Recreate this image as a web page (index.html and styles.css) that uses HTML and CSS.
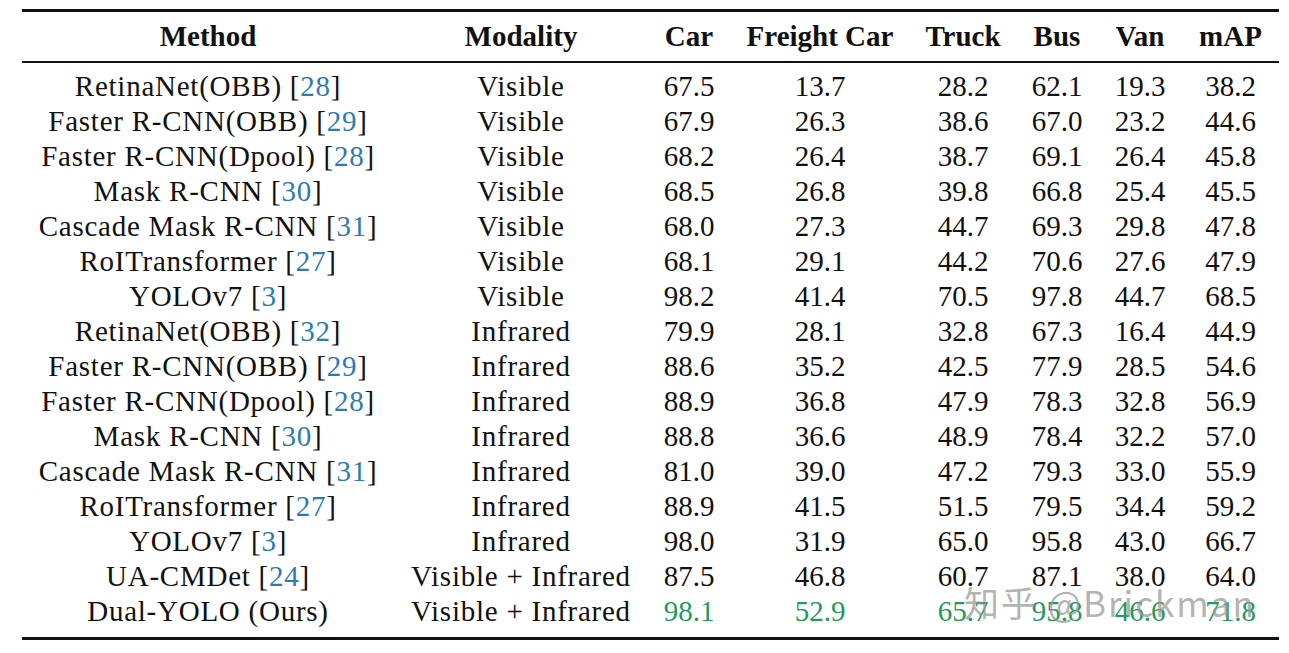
FILE: index.html
```html
<!DOCTYPE html>
<html lang="en">
<head>
<meta charset="utf-8">
<title>Results table</title>
<link rel="stylesheet" href="styles.css">
</head>
<body>
<div class="page">
  <table class="results">
    <colgroup>
      <col class="c-method"><col class="c-mod"><col class="c-car"><col class="c-freight"><col class="c-truck"><col class="c-bus"><col class="c-van"><col class="c-map">
    </colgroup>
    <thead>
      <tr><th>Method</th><th>Modality</th><th>Car</th><th>Freight Car</th><th>Truck</th><th>Bus</th><th>Van</th><th>mAP</th></tr>
    </thead>
    <tbody>
      <tr><td class="txt">RetinaNet(OBB) [<span class="ref">28</span>]</td><td class="txt">Visible</td><td>67.5</td><td>13.7</td><td>28.2</td><td>62.1</td><td>19.3</td><td>38.2</td></tr>
      <tr><td class="txt">Faster R-CNN(OBB) [<span class="ref">29</span>]</td><td class="txt">Visible</td><td>67.9</td><td>26.3</td><td>38.6</td><td>67.0</td><td>23.2</td><td>44.6</td></tr>
      <tr><td class="txt">Faster R-CNN(Dpool) [<span class="ref">28</span>]</td><td class="txt">Visible</td><td>68.2</td><td>26.4</td><td>38.7</td><td>69.1</td><td>26.4</td><td>45.8</td></tr>
      <tr><td class="txt">Mask R-CNN [<span class="ref">30</span>]</td><td class="txt">Visible</td><td>68.5</td><td>26.8</td><td>39.8</td><td>66.8</td><td>25.4</td><td>45.5</td></tr>
      <tr><td class="txt">Cascade Mask R-CNN [<span class="ref">31</span>]</td><td class="txt">Visible</td><td>68.0</td><td>27.3</td><td>44.7</td><td>69.3</td><td>29.8</td><td>47.8</td></tr>
      <tr><td class="txt">RoITransformer [<span class="ref">27</span>]</td><td class="txt">Visible</td><td>68.1</td><td>29.1</td><td>44.2</td><td>70.6</td><td>27.6</td><td>47.9</td></tr>
      <tr><td class="txt">YOLOv7 [<span class="ref">3</span>]</td><td class="txt">Visible</td><td>98.2</td><td>41.4</td><td>70.5</td><td>97.8</td><td>44.7</td><td>68.5</td></tr>
      <tr><td class="txt">RetinaNet(OBB) [<span class="ref">32</span>]</td><td class="txt">Infrared</td><td>79.9</td><td>28.1</td><td>32.8</td><td>67.3</td><td>16.4</td><td>44.9</td></tr>
      <tr><td class="txt">Faster R-CNN(OBB) [<span class="ref">29</span>]</td><td class="txt">Infrared</td><td>88.6</td><td>35.2</td><td>42.5</td><td>77.9</td><td>28.5</td><td>54.6</td></tr>
      <tr><td class="txt">Faster R-CNN(Dpool) [<span class="ref">28</span>]</td><td class="txt">Infrared</td><td>88.9</td><td>36.8</td><td>47.9</td><td>78.3</td><td>32.8</td><td>56.9</td></tr>
      <tr><td class="txt">Mask R-CNN [<span class="ref">30</span>]</td><td class="txt">Infrared</td><td>88.8</td><td>36.6</td><td>48.9</td><td>78.4</td><td>32.2</td><td>57.0</td></tr>
      <tr><td class="txt">Cascade Mask R-CNN [<span class="ref">31</span>]</td><td class="txt">Infrared</td><td>81.0</td><td>39.0</td><td>47.2</td><td>79.3</td><td>33.0</td><td>55.9</td></tr>
      <tr><td class="txt">RoITransformer [<span class="ref">27</span>]</td><td class="txt">Infrared</td><td>88.9</td><td>41.5</td><td>51.5</td><td>79.5</td><td>34.4</td><td>59.2</td></tr>
      <tr><td class="txt">YOLOv7 [<span class="ref">3</span>]</td><td class="txt">Infrared</td><td>98.0</td><td>31.9</td><td>65.0</td><td>95.8</td><td>43.0</td><td>66.7</td></tr>
      <tr><td class="txt">UA-CMDet [<span class="ref">24</span>]</td><td class="txt">Visible + Infrared</td><td>87.5</td><td>46.8</td><td>60.7</td><td>87.1</td><td>38.0</td><td>64.0</td></tr>
      <tr><td class="txt">Dual-YOLO (Ours)</td><td class="txt">Visible + Infrared</td><td class="best">98.1</td><td class="best">52.9</td><td class="best">65.7</td><td class="best">95.8</td><td class="best">46.6</td><td class="best">71.8</td></tr>
    </tbody>
  </table>
  <div class="watermark">知乎 @Brickman</div>
</div>
</body>
</html>
```

FILE: styles.css
```css
html, body {
  margin: 0;
  padding: 0;
  background: #ffffff;
}

.page {
  position: relative;
  width: 1289px;
  height: 653px;
  padding: 9px 0 0 22px;
  box-sizing: border-box;
}

.results {
  width: 1257px;
  table-layout: fixed;
  border-collapse: collapse;
  font-family: "Liberation Serif", "Times New Roman", serif;
  font-size: 29px;
  color: #111111;
}

.c-method { width: 372px; }
.c-mod { width: 254px; }
.c-car { width: 82px; }
.c-freight { width: 180px; }
.c-truck { width: 106px; }
.c-bus { width: 82px; }
.c-van { width: 84px; }
.c-map { width: 97px; }

.results th,
.results td {
  padding: 0;
  text-align: center;
  white-space: nowrap;
  overflow: visible;
}

.results thead th {
  font-weight: bold;
  height: 49px;
  line-height: 49px;
  border-top: 3px solid #111111;
  border-bottom: 2px solid #111111;
}

.results tbody td {
  height: 35px;
  line-height: 35px;
}

.results tbody td.txt {
  letter-spacing: 0.75px;
}

.results tbody tr:first-child td {
  padding-top: 6px;
}

.results tbody tr:last-child td {
  padding-bottom: 8px;
  border-bottom: 3px solid #111111;
}

.ref {
  color: #2f7bb0;
}

.best {
  color: #24995a;
}

.watermark {
  position: absolute;
  left: 964px;
  top: 582px;
  font-family: "Noto Sans CJK SC", "Noto Sans", sans-serif;
  font-size: 35px;
  line-height: 40px;
  letter-spacing: 2px;
  color: rgba(150, 150, 150, 0.72);
  white-space: nowrap;
  pointer-events: none;
}
```
